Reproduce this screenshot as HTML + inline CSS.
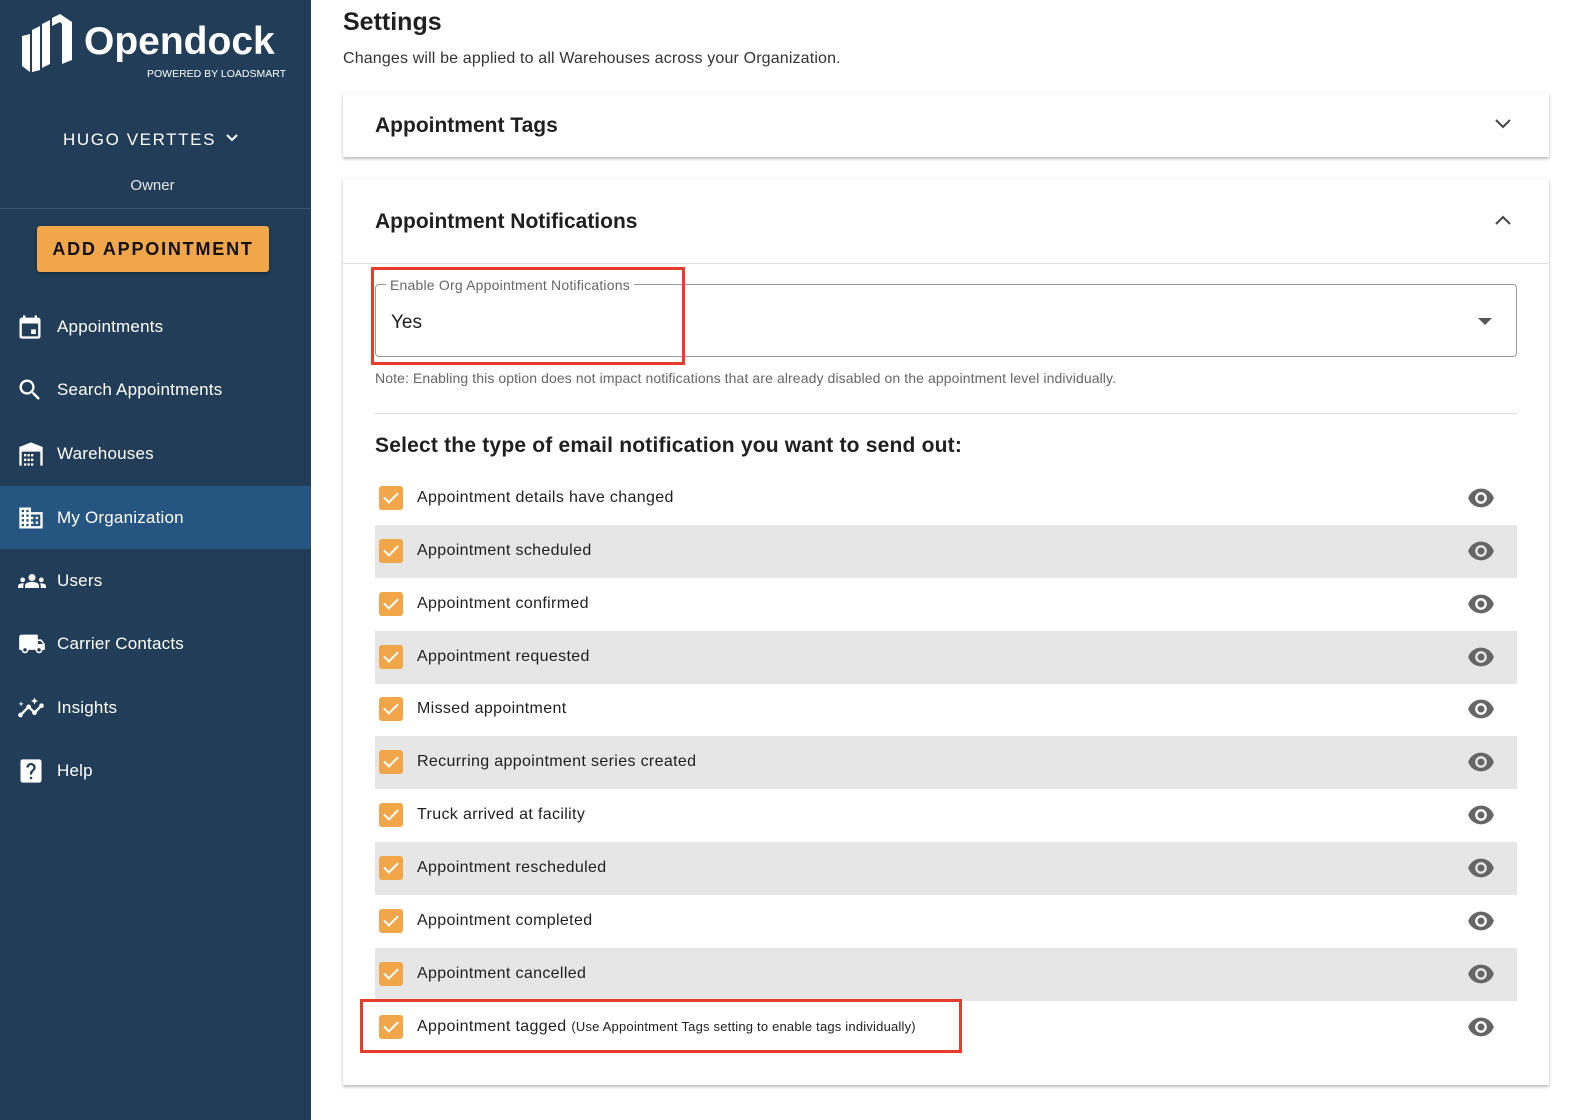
<!DOCTYPE html>
<html><head><style>
*{box-sizing:border-box;margin:0;padding:0}
body{width:1582px;height:1120px;overflow:hidden;background:#fff;font-family:"Liberation Sans",sans-serif;position:relative;color:#1f1f1f}
.sb{position:absolute;left:0;top:0;width:311px;height:1120px;background:#213d57;color:#fff}
.nav{position:absolute;left:0;width:311px;height:63px;display:flex;align-items:center;font-size:17px;letter-spacing:0.2px}
.nav svg{position:absolute;left:16px}
.nav span{position:absolute;left:57px}
.card{position:absolute;left:343px;width:1206px;background:#fff;box-shadow:0 2px 3px rgba(0,0,0,.25),0 0 2px rgba(0,0,0,.08)}
.row{position:absolute;left:375px;width:1142px;height:53px}
.row.g{background:#e6e6e6}
.cb{position:absolute;left:4px;top:14px;width:24px;height:24px;background:#f2a64a;border-radius:3px}
.cb:after{content:"";position:absolute;left:8px;top:3px;width:6px;height:12px;border:solid #fff;border-width:0 2.5px 2.5px 0;transform:rotate(45deg)}
.row .t{position:absolute;left:42px;top:17px;font-size:16px;letter-spacing:0.35px}
.eye{position:absolute;right:22px;top:16px}
</style></head><body>
<div class="sb">
<svg style="position:absolute;left:20px;top:14px" width="54" height="60" viewBox="0 0 54 60"><g fill="#fff"><polygon points="2,22 10,20 10,58 2,52"/><polygon points="12,16 20,12 20,56 12,58"/><polygon points="22,10 30,6 30,50 22,54"/><polygon points="32,4 40,0 52,8 52,46 42,50 42,10 40,8 32,12"/><polygon points="12,42 20,36 20,56 12,58"/></g></svg>
<div style="position:absolute;left:84px;top:20px;font-size:39px;font-weight:bold;letter-spacing:0px">Opendock</div>
<div style="position:absolute;left:147px;top:68px;font-size:10.5px">POWERED BY LOADSMART</div>
<div style="position:absolute;left:63px;top:130px;font-size:17px;letter-spacing:1.6px">HUGO VERTTES</div>
<svg style="position:absolute;left:225px;top:133px" width="14" height="10"><path d="M2 2l5 5 5-5" stroke="#fff" stroke-width="2" fill="none"/></svg>
<div style="position:absolute;left:0;width:305px;top:177px;text-align:center;font-size:15px;color:#e6e6e6">Owner</div>
<div style="position:absolute;left:0;top:208px;width:311px;height:1px;background:#3d5670"></div>
<div style="position:absolute;left:37px;top:226px;width:232px;height:46px;background:#f2a64a;border-radius:3px;color:#111;font-weight:bold;font-size:18px;letter-spacing:1.8px;text-align:center;line-height:46px;box-shadow:0 2px 3px rgba(0,0,0,.3)">ADD APPOINTMENT</div>
<div class="nav" style="top:295px"><svg width="28" height="28" viewBox="0 0 24 24"><path fill="#fff" d="M19 4h-1V2h-2v2H8V2H6v2H5a2 2 0 00-2 2v14a2 2 0 002 2h14a2 2 0 002-2V6a2 2 0 00-2-2zm0 16H5V9h14zm-6-6h4v4h-4z"/></svg><span>Appointments</span></div>
<div class="nav" style="top:358px"><svg width="28" height="28" viewBox="0 0 24 24"><path fill="#fff" d="M15.5 14h-.8l-.3-.3A6.5 6.5 0 109.5 16a6.5 6.5 0 004.2-1.6l.3.3v.8l5 5 1.5-1.5zm-6 0a4.5 4.5 0 110-9 4.5 4.5 0 010 9z"/></svg><span>Search Appointments</span></div>
<div class="nav" style="top:422px"><svg width="30" height="28" viewBox="0 0 24 24"><path fill="#fff" d="M12 2L2 6v16h2V10h16v12h2V6zM6 12h2v2H6zm3 0h2v2H9zm3 0h2v2h-2zM6 16h2v2H6zm3 0h2v2H9zm3 0h2v2h-2zM6 20h2v2H6zm3 0h2v2H9zm3 0h2v2h-2z"/></svg><span>Warehouses</span></div>
<div class="nav" style="top:486px;background:#255580"><svg width="30" height="28" viewBox="0 0 24 24"><path fill="#fff" d="M12 7V3H2v18h20V7zM6 19H4v-2h2zm0-4H4v-2h2zm0-4H4V9h2zm0-4H4V5h2zm4 12H8v-2h2zm0-4H8v-2h2zm0-4H8V9h2zm0-4H8V5h2zm10 12h-8v-2h2v-2h-2v-2h2v-2h-2V9h8zm-2-8h-2v2h2zm0 4h-2v2h2z"/></svg><span>My Organization</span></div>
<div class="nav" style="top:549px"><svg width="32" height="28" viewBox="0 0 24 24"><path fill="#fff" d="M12 12.75c1.63 0 3.07.39 4.24.9 1.08.48 1.76 1.560 1.76 2.73V18H6v-1.61c0-1.18.68-2.26 1.76-2.73 1.170-.52 2.61-.91 4.24-.91zM4 13a2 2 0 100-4 2 2 0 000 4zm1.13 1.1A7 7 0 004 14c-.99 0-1.93.21-2.78.58A2 2 0 000 16.43V18h4.5v-1.61c0-.83.23-1.61.63-2.29zM20 13a2 2 0 100-4 2 2 0 000 4zm4 3.43c0-.81-.48-1.53-1.22-1.85A6.95 6.95 0 0020 14c-.39 0-.76.04-1.13.1.4.68.63 1.46.63 2.29V18H24zM12 6a3 3 0 110 6 3 3 0 010-6z"/></svg><span>Users</span></div>
<div class="nav" style="top:612px"><svg width="32" height="28" viewBox="0 0 24 24"><path fill="#fff" d="M20 8h-3V4H3a2 2 0 00-2 2v11h2a3 3 0 006 0h6a3 3 0 006 0h2v-5zM6 18.5a1.5 1.5 0 110-3 1.5 1.5 0 010 3zm12 0a1.5 1.5 0 110-3 1.5 1.5 0 010 3zM17 12V9.5h2.5l1.96 2.5z"/></svg><span>Carrier Contacts</span></div>
<div class="nav" style="top:676px"><svg width="30" height="28" viewBox="0 0 24 24"><path fill="#fff" d="M21 8a2 2 0 00-2 2c0 .18.02.35.07.51l-3.56 3.55c-.16-.05-.34-.06-.51-.06s-.35.02-.51.07l-2.550-2.55c.05-.16.06-.34.06-.52a2 2 0 10-4 0c0 .18.02.36.07.52L3.52 16.07C3.36 16.02 3.19 16 3 16a2 2 0 102 2c0-.18-.02-.35-.07-.51l4.55-4.56c.16.05.34.07.52.07s.36-.02.52-.07l2.55 2.55c-.05.16-.07.34-.07.52a2 2 0 104 0c0-.18-.02-.35-.07-.51l3.56-3.55c.16.04.33.06.51.06a2 2 0 100-4zM15 9l.94-2.07L18 6l-2.06-.93L15 3l-.92 2.07L12 6l2.08.93zM3.5 11L4 9l2-.5L4 8l-.5-2L3 8l-2 .5L3 9z"/></svg><span>Insights</span></div>
<div class="nav" style="top:739px"><svg width="30" height="28" viewBox="0 0 24 24"><path fill="#fff" d="M19 2H5a2 2 0 00-2 2v16a2 2 0 002 2h14a2 2 0 002-2V4a2 2 0 00-2-2zm-6 17h-2v-2h2zm2.07-7.75l-.9.92C13.45 12.9 13 13.5 13 15h-2v-.5c0-1.1.45-2.1 1.17-2.83l1.24-1.26c.37-.36.59-.86.59-1.41a2 2 0 00-4 0H8a4 4 0 018 0c0 .88-.36 1.68-.93 2.25z"/></svg><span>Help</span></div>
</div>

<div style="position:absolute;left:343px;top:8px;font-size:25px;font-weight:bold">Settings</div>
<div style="position:absolute;left:343px;top:50px;font-size:16px;color:#333;letter-spacing:0.15px">Changes will be applied to all Warehouses across your Organization.</div>

<div class="card" style="top:93px;height:64px">
<div style="position:absolute;left:32px;top:21px;font-size:21px;font-weight:bold">Appointment Tags</div>
<svg style="position:absolute;right:38px;top:26px" width="16" height="10"><path d="M1 1l7 7 7-7" stroke="#444" stroke-width="2" fill="none"/></svg>
</div>

<div class="card" style="top:179px;height:906px">
<div style="position:absolute;left:32px;top:31px;font-size:21px;font-weight:bold">Appointment Notifications</div>
<svg style="position:absolute;right:38px;top:36px" width="16" height="10"><path d="M1 9l7-7 7 7" stroke="#444" stroke-width="2" fill="none"/></svg>
<div style="position:absolute;left:0;top:84px;width:1206px;height:1px;background:#e0e0e0"></div>
</div>

<div style="position:absolute;left:375px;top:284px;width:1142px;height:73px;border:1px solid #999;border-radius:4px"></div>
<div style="position:absolute;left:386px;top:277px;padding:0 4px;background:#fff;font-size:14px;color:#666;letter-spacing:0.2px">Enable Org Appointment Notifications</div>
<div style="position:absolute;left:391px;top:312px;font-size:19px">Yes</div>
<svg style="position:absolute;left:1478px;top:318px" width="14" height="8"><path d="M0 0h14L7 7z" fill="#555"/></svg>
<div style="position:absolute;left:371px;top:267px;width:314px;height:98px;border:3px solid #e63d2a"></div>
<div style="position:absolute;left:375px;top:370px;font-size:14px;color:#666;letter-spacing:0.1px">Note: Enabling this option does not impact notifications that are already disabled on the appointment level individually.</div>
<div style="position:absolute;left:375px;top:413px;width:1142px;height:1px;background:#ddd"></div>
<div style="position:absolute;left:375px;top:434px;font-size:21px;font-weight:bold;letter-spacing:0.2px">Select the type of email notification you want to send out:</div>

<div class="row" style="top:472px"><div class="cb"></div><div class="t">Appointment details have changed</div><svg class="eye" width="28" height="20" viewBox="0 0 24 16"><path fill="#666" d="M12 0C7 0 2.7 3.1 1 8c1.7 4.9 6 8 11 8s9.3-3.1 11-8c-1.7-4.9-6-8-11-8zm0 13a5 5 0 110-10 5 5 0 010 10zm0-8a3 3 0 100 6 3 3 0 000-6z"/></svg></div>
<div class="row g" style="top:525px"><div class="cb"></div><div class="t">Appointment scheduled</div><svg class="eye" width="28" height="20" viewBox="0 0 24 16"><path fill="#666" d="M12 0C7 0 2.7 3.1 1 8c1.7 4.9 6 8 11 8s9.3-3.1 11-8c-1.7-4.9-6-8-11-8zm0 13a5 5 0 110-10 5 5 0 010 10zm0-8a3 3 0 100 6 3 3 0 000-6z"/></svg></div>
<div class="row" style="top:578px"><div class="cb"></div><div class="t">Appointment confirmed</div><svg class="eye" width="28" height="20" viewBox="0 0 24 16"><path fill="#666" d="M12 0C7 0 2.7 3.1 1 8c1.7 4.9 6 8 11 8s9.3-3.1 11-8c-1.7-4.9-6-8-11-8zm0 13a5 5 0 110-10 5 5 0 010 10zm0-8a3 3 0 100 6 3 3 0 000-6z"/></svg></div>
<div class="row g" style="top:631px"><div class="cb"></div><div class="t">Appointment requested</div><svg class="eye" width="28" height="20" viewBox="0 0 24 16"><path fill="#666" d="M12 0C7 0 2.7 3.1 1 8c1.7 4.9 6 8 11 8s9.3-3.1 11-8c-1.7-4.9-6-8-11-8zm0 13a5 5 0 110-10 5 5 0 010 10zm0-8a3 3 0 100 6 3 3 0 000-6z"/></svg></div>
<div class="row" style="top:683px"><div class="cb"></div><div class="t">Missed appointment</div><svg class="eye" width="28" height="20" viewBox="0 0 24 16"><path fill="#666" d="M12 0C7 0 2.7 3.1 1 8c1.7 4.9 6 8 11 8s9.3-3.1 11-8c-1.7-4.9-6-8-11-8zm0 13a5 5 0 110-10 5 5 0 010 10zm0-8a3 3 0 100 6 3 3 0 000-6z"/></svg></div>
<div class="row g" style="top:736px"><div class="cb"></div><div class="t">Recurring appointment series created</div><svg class="eye" width="28" height="20" viewBox="0 0 24 16"><path fill="#666" d="M12 0C7 0 2.7 3.1 1 8c1.7 4.9 6 8 11 8s9.3-3.1 11-8c-1.7-4.9-6-8-11-8zm0 13a5 5 0 110-10 5 5 0 010 10zm0-8a3 3 0 100 6 3 3 0 000-6z"/></svg></div>
<div class="row" style="top:789px"><div class="cb"></div><div class="t">Truck arrived at facility</div><svg class="eye" width="28" height="20" viewBox="0 0 24 16"><path fill="#666" d="M12 0C7 0 2.7 3.1 1 8c1.7 4.9 6 8 11 8s9.3-3.1 11-8c-1.7-4.9-6-8-11-8zm0 13a5 5 0 110-10 5 5 0 010 10zm0-8a3 3 0 100 6 3 3 0 000-6z"/></svg></div>
<div class="row g" style="top:842px"><div class="cb"></div><div class="t">Appointment rescheduled</div><svg class="eye" width="28" height="20" viewBox="0 0 24 16"><path fill="#666" d="M12 0C7 0 2.7 3.1 1 8c1.7 4.9 6 8 11 8s9.3-3.1 11-8c-1.7-4.9-6-8-11-8zm0 13a5 5 0 110-10 5 5 0 010 10zm0-8a3 3 0 100 6 3 3 0 000-6z"/></svg></div>
<div class="row" style="top:895px"><div class="cb"></div><div class="t">Appointment completed</div><svg class="eye" width="28" height="20" viewBox="0 0 24 16"><path fill="#666" d="M12 0C7 0 2.7 3.1 1 8c1.7 4.9 6 8 11 8s9.3-3.1 11-8c-1.7-4.9-6-8-11-8zm0 13a5 5 0 110-10 5 5 0 010 10zm0-8a3 3 0 100 6 3 3 0 000-6z"/></svg></div>
<div class="row g" style="top:948px"><div class="cb"></div><div class="t">Appointment cancelled</div><svg class="eye" width="28" height="20" viewBox="0 0 24 16"><path fill="#666" d="M12 0C7 0 2.7 3.1 1 8c1.7 4.9 6 8 11 8s9.3-3.1 11-8c-1.7-4.9-6-8-11-8zm0 13a5 5 0 110-10 5 5 0 010 10zm0-8a3 3 0 100 6 3 3 0 000-6z"/></svg></div>
<div class="row" style="top:1001px"><div class="cb"></div><div class="t">Appointment tagged <span style="font-size:13px;letter-spacing:0.2px">(Use Appointment Tags setting to enable tags individually)</span></div><svg class="eye" width="28" height="20" viewBox="0 0 24 16"><path fill="#666" d="M12 0C7 0 2.7 3.1 1 8c1.7 4.9 6 8 11 8s9.3-3.1 11-8c-1.7-4.9-6-8-11-8zm0 13a5 5 0 110-10 5 5 0 010 10zm0-8a3 3 0 100 6 3 3 0 000-6z"/></svg></div>
<div style="position:absolute;left:360px;top:999px;width:602px;height:54px;border:3px solid #e63d2a"></div>
</body></html>
